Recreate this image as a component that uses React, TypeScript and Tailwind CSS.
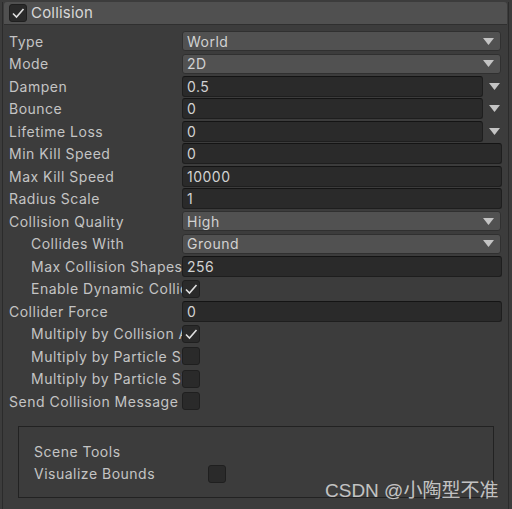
import type { ReactNode } from "react";

type Row =
  | { label: string; indent?: boolean; kind: "dropdown"; value: string }
  | { label: string; indent?: boolean; kind: "curve"; value: string }
  | { label: string; indent?: boolean; kind: "number"; value: string }
  | { label: string; indent?: boolean; kind: "check"; checked: boolean };

const ROWS: Row[] = [
  { label: "Type", kind: "dropdown", value: "World" },
  { label: "Mode", kind: "dropdown", value: "2D" },
  { label: "Dampen", kind: "curve", value: "0.5" },
  { label: "Bounce", kind: "curve", value: "0" },
  { label: "Lifetime Loss", kind: "curve", value: "0" },
  { label: "Min Kill Speed", kind: "number", value: "0" },
  { label: "Max Kill Speed", kind: "number", value: "10000" },
  { label: "Radius Scale", kind: "number", value: "1" },
  { label: "Collision Quality", kind: "dropdown", value: "High" },
  { label: "Collides With", indent: true, kind: "dropdown", value: "Ground" },
  { label: "Max Collision Shapes", indent: true, kind: "number", value: "256" },
  { label: "Enable Dynamic Colliders", indent: true, kind: "check", checked: true },
  { label: "Collider Force", kind: "number", value: "0" },
  { label: "Multiply by Collision Angle", indent: true, kind: "check", checked: true },
  { label: "Multiply by Particle Speed", indent: true, kind: "check", checked: false },
  { label: "Multiply by Particle Size", indent: true, kind: "check", checked: false },
  { label: "Send Collision Message", kind: "check", checked: false },
];

function Arrow() {
  return (
    <svg width="11" height="7" viewBox="0 0 11 7" className="shrink-0">
      <path d="M0 0 H11 L5.5 7 Z" fill="#c4c4c4" />
    </svg>
  );
}

function CheckBox({ checked }: { checked: boolean }) {
  return (
    <div className="flex h-[18px] w-[18px] shrink-0 items-center justify-center rounded-[3px] border border-[#1f1f1f] bg-[#2a2a2a]">
      {checked ? (
        <svg width="14" height="12" viewBox="0 0 14 12">
          <path d="M2 6.5 L5.5 10 L12.5 2" stroke="#e0e0e0" strokeWidth="1.6" fill="none" />
        </svg>
      ) : null}
    </div>
  );
}

function Field({ row }: { row: Row }): ReactNode {
  if (row.kind === "dropdown") {
    return (
      <div className="flex h-[20px] w-[319px] items-center justify-between rounded-[3px] border border-[#303030] bg-[#515151] pl-[4px] pr-[6px] text-[#d2d2d2]">
        <span>{row.value}</span>
        <Arrow />
      </div>
    );
  }
  if (row.kind === "curve") {
    return (
      <div className="flex items-center">
        <div className="flex h-[21px] w-[301px] items-center rounded-[3px] border border-[#1e1e1e] border-t-[#141414] bg-[#2a2a2a] pl-[4px] text-[#d2d2d2]">
          {row.value}
        </div>
        <div className="ml-[6px]">
          <Arrow />
        </div>
      </div>
    );
  }
  if (row.kind === "number") {
    return (
      <div className="flex h-[21px] w-[320px] items-center rounded-[3px] border border-[#1e1e1e] border-t-[#141414] bg-[#2a2a2a] pl-[4px] text-[#d2d2d2]">
        {row.value}
      </div>
    );
  }
  return <CheckBox checked={row.checked} />;
}

export default function App() {
  return (
    <div className="relative h-[509px] w-[512px] overflow-hidden bg-[#3c3c3c] font-['Inter','Liberation_Sans',sans-serif] text-[14px] tracking-[0.5px]">
      <div className="ml-[2px] h-full w-[507px] border-x border-[#2b2b2b]">
        <div className="mx-[1px] mt-[2px] flex h-[23px] items-center gap-[4px] rounded-t-[3px] border-b border-[#2f2f2f] bg-[#505050] pl-[5px] text-[15px] tracking-[0.2px] text-[#d8d8d8]">
          <CheckBox checked />
          <span>Collision</span>
        </div>

        <div className="mt-[5px] flex flex-col">
          {ROWS.map((row) => (
            <div key={row.label} className="flex h-[22.5px] items-center">
              <div
                className={`w-[179px] shrink-0 overflow-hidden whitespace-nowrap text-[#c4c4c4] ${
                  row.indent ? "pl-[28px]" : "pl-[6px]"
                }`}
              >
                {row.label}
              </div>
              <Field row={row} />
            </div>
          ))}
        </div>

        <div className="ml-[15px] mt-[13px] h-[72px] w-[476px] border border-[#222222] pl-[15px] pt-[14px] text-[#c4c4c4]">
          <div className="flex h-[22px] items-center">Scene Tools</div>
          <div className="flex h-[22px] items-center">
            <span className="w-[174px]">Visualize Bounds</span>
            <CheckBox checked={false} />
          </div>
        </div>
      </div>

      <div className="absolute left-[325px] top-[477px] font-['Liberation_Sans','Noto_Sans_CJK_SC',sans-serif] text-[19px] tracking-normal text-[#e8e8e8]/80">
        CSDN @小陶型不准
      </div>
    </div>
  );
}
